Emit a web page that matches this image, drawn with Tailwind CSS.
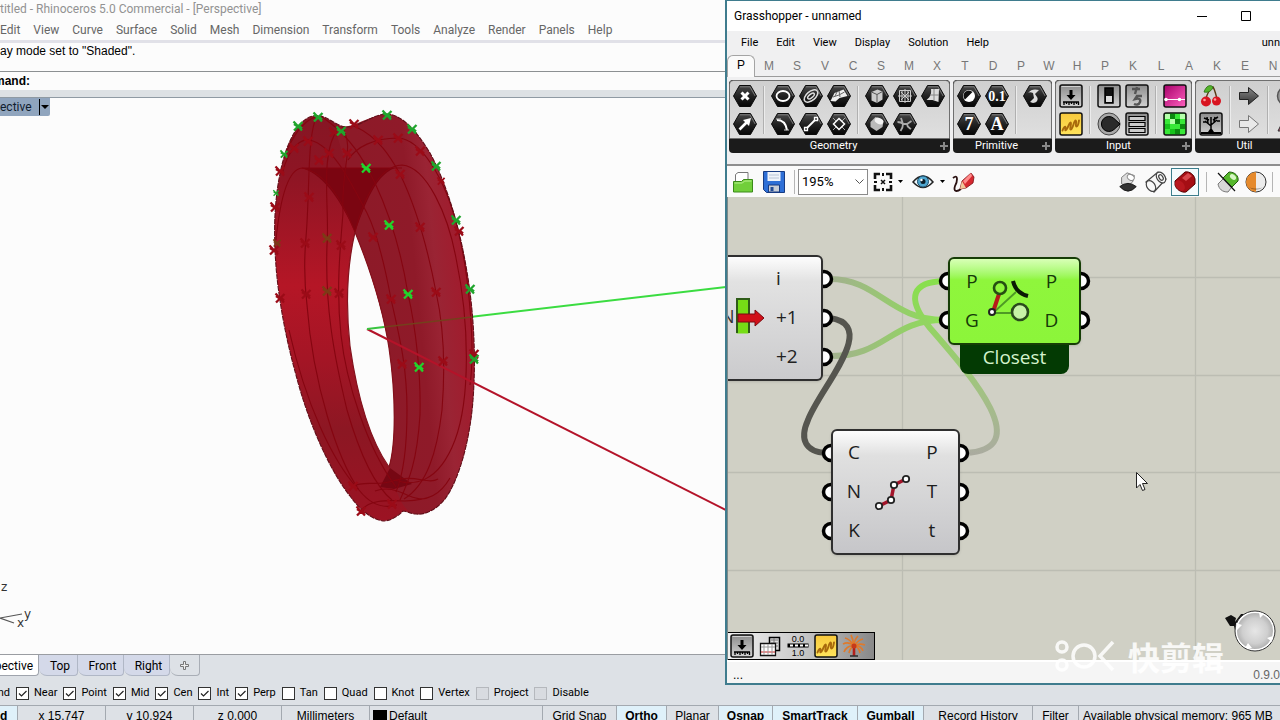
<!DOCTYPE html>
<html lang="en">
<head>
<meta charset="utf-8">
<title>Rhinoceros and Grasshopper</title>
<script src="https://cdn.jsdelivr.net/npm/@tailwindcss/browser@4"></script>
</head>
<body class="h-screen overflow-hidden bg-[#fcfcfc] font-['Roboto','Noto_Sans_CJK_SC',sans-serif] text-xs text-black">

<svg class="absolute size-0" aria-hidden="true">
  <defs>
    <linearGradient id="hexFill" x1="0" y1="0" x2="0" y2="1"><stop offset="0" stop-color="#4a4a4a"/><stop offset=".5" stop-color="#222"/><stop offset="1" stop-color="#050505"/></linearGradient>
    <linearGradient id="plate" x1="0" y1="0" x2="0" y2="1"><stop offset="0" stop-color="#8c8c8c"/><stop offset="1" stop-color="#d2d2d2"/></linearGradient>
    <linearGradient id="yellow" x1="0" y1="0" x2="0" y2="1"><stop offset="0" stop-color="#f8c93c"/><stop offset="1" stop-color="#ffe45c"/></linearGradient>
    <linearGradient id="pink" x1="0" y1="0" x2="1" y2="1"><stop offset="0" stop-color="#a8006a"/><stop offset="1" stop-color="#ff62c0"/></linearGradient>
    <linearGradient id="arrowDark" x1="0" y1="0" x2="0" y2="1"><stop offset="0" stop-color="#888"/><stop offset="1" stop-color="#333"/></linearGradient>
    <radialGradient id="ball" cx=".5" cy=".5" r=".55"><stop offset="0" stop-color="#e6e6e6"/><stop offset=".6" stop-color="#cfcfcf"/><stop offset="1" stop-color="#a4a4a4"/></radialGradient>
    <symbol id="hex" viewBox="0 0 24 24"><path d="M6.500 1.500h11L23.500 12l-6 10.500h-11L.5 12z" fill="url(#hexFill)" stroke="#0b0b0b"/><path d="M7 2.800h10L22.200 12" fill="none" stroke="#8a8a8a" stroke-width=".8"/></symbol>
    <symbol id="tray" viewBox="0 0 24 24"><rect x="1" y="1" width="22" height="22" rx="2" fill="url(#plate)" stroke="#111" stroke-width="1.500"/><path d="M2.500 2.500h19" stroke="#e0e0e0" stroke-width=".8"/><path d="M10.500 6h3v5h3L12 16l-4.500-5h3z" fill="#000"/><path d="M4 18h16M5 18v3M7.500 18v2M10 18v3M12.500 18v2M15 18v3M17.500 18v2M19.500 18v3" stroke="#000" stroke-width="1.300"/></symbol>
    <symbol id="scribble" viewBox="0 0 24 24"><rect x="1" y="1" width="22" height="22" rx="2" fill="url(#yellow)" stroke="#111" stroke-width="1.500"/><path d="M3.500 18.500c1-3 3-5 3-3s-1 4 1 2 2.500-7 4-7-1.500 8 .5 7 3-9 4.500-9-.5 6 1 6 2-3 2.500-6" fill="none" stroke="#a8690c" stroke-width="1.900" stroke-linecap="round" stroke-linejoin="round"/></symbol>
    <symbol id="x" viewBox="-5 -5 10 10" overflow="visible"><path d="M-4.500-4.500 4 4.500M4.500-4-4 4.500M-4-2l3 2M4 2.500 1 0" fill="none" stroke="currentColor" stroke-width="2.300"/></symbol>
    <symbol id="plus" viewBox="0 0 8 8"><path d="M4 0v8M0 4h8" stroke="#888" stroke-width="2"/></symbol>
  </defs>
</svg>

<!-- Rhinoceros main window -->
<main class="flex h-full w-full flex-col">
  <header class="flex h-[18px] shrink-0 items-center whitespace-nowrap text-[#929292]"><h1>titled - Rhinoceros 5.0 Commercial - [Perspective]</h1></header>
  <nav class="flex h-[22px] shrink-0 items-center gap-[13px] pt-px text-[#666]" aria-label="Rhino menu">
    <button>Edit</button><button>View</button><button>Curve</button><button>Surface</button><button>Solid</button><button>Mesh</button><button>Dimension</button><button>Transform</button><button>Tools</button><button>Analyze</button><button>Render</button><button>Panels</button><button>Help</button>
  </nav>
  <div class="h-8 shrink-0 border-t-3 border-b border-t-[#e1e1e8] border-b-[#8c9092] font-['Liberation_Sans',sans-serif] leading-4">ay mode set to "Shaded".</div>
  <label class="flex h-[18px] shrink-0 items-center font-['Liberation_Sans',sans-serif] font-bold"><span class="flex w-[30px] justify-end overflow-hidden">mand:</span><input class="ml-2 h-4 flex-1 outline-none" type="text" aria-label="Command"></label>
  <div class="h-2 shrink-0 border-b border-[#8f9aa3] bg-[#dde1e4]"></div>

  <section class="relative min-h-0 flex-1 overflow-hidden" aria-label="Perspective viewport">
    <svg class="block h-[556px] w-[726px]" viewBox="0 98 726 556" fill="none">
      <defs>
        <linearGradient id="lobeL" x1="320" y1="115" x2="320" y2="521" gradientUnits="userSpaceOnUse"><stop offset="0" stop-color="#861624"/><stop offset=".15" stop-color="#8e1524"/><stop offset=".42" stop-color="#b51626"/><stop offset=".6" stop-color="#a41525"/><stop offset=".78" stop-color="#8c1723"/><stop offset="1" stop-color="#9c1323"/></linearGradient>
        <linearGradient id="lobeR" x1="370" y1="300" x2="475" y2="290" gradientUnits="userSpaceOnUse"><stop offset="0" stop-color="#8d1a28"/><stop offset=".45" stop-color="#8f1a29"/><stop offset=".65" stop-color="#9a2434"/><stop offset="1" stop-color="#a4182a"/></linearGradient>
      </defs>
      <path d="M470 317 726 287" stroke="#3bdc41" stroke-width="2"/>
      <!-- ring body -->
      <path fill-rule="evenodd" fill="url(#lobeL)" d="M275 248C273 205 279 170 287 148C296 125 306 115 318 115.500C330 117 336 127 348 127C362 126 372 114 388 114C404 116 417 132 430 153C448 186 462 235 469 285C474 320 476 360 473 400C470 440 459 480 445 499C435 511 424 515 416 514C411 514 407 511 403 511C397 517 390 521 383 521C371 519 360 510 350 496C330 471 308 422 296 375C284 332 276 285 275 248zM355 232C348 262 345 300 350 346C357 395 370 440 389 467C396 445 396 395 389 348C384 315 371 271 355 232z"/>
      <path fill="url(#lobeR)" d="M355 232C362 210 342 150 334 127C352 130 368 115 388 114C404 116 417 132 430 153C448 186 462 235 469 285C474 320 476 360 473 400C470 440 459 480 445 499C435 511 424 515 416 514C405 513 398 500 389 467C396 445 396 395 389 348C384 315 371 271 355 232z"/>
      <path d="M302 168H395C373 176 363 212 355 232C344 208 327 176 302 168z" fill="#7b0511"/>
      <path d="M380 487 390 468 412 484 394 489z" fill="#760713"/>
      <!-- surface isocurves -->
      <g stroke="#850510" stroke-width="1.100">
        <path d="M276 240C281 190 290 169 302 168C326 172 344 204 355 232C362 205 377 166 402 165C427 167 448 215 456 258C470 325 470 400 455 440C438 485 412 486 395 480"/>
        <path d="M302 168H402"/>
        <path d="M282 174C290 143 303 139 310 140C334 146 352 185 367 213C378 235 385 267 391 299C399 335 407 365 407 410C407 455 401 480 396 492"/>
        <path d="M286 153C297 125 315 111 325 119C350 137 363 158 375 183C390 215 401 250 408 294C416 329 421 375 420 415C417 462 409 480 400 500"/>
        <path d="M354 126C379 137 391 158 400 174C417 209 428 250 436 292C445 332 445 372 442 410C437 452 427 485 404 499"/>
        <path d="M317 116C307 134 310 190 306 237C304 260 304 280 307 305C313 385 338 460 359 490C370 504 383 509 397 505"/>
        <path d="M338 129C319 153 330 211 327 245C325 305 333 352 347 410C360 455 375 486 392 500"/>
        <path d="M342 127C355 148 341 165 343 213C340 250 336 290 341 335C346 382 367 448 396 487"/>
        <path d="M348 160C356 147 374 138 398 138C420 139 445 176 458 230C470 280 475 350 470 385"/>
        <path d="M353 486C365 480 379 487 396 480C415 474 428 485 438 479M361 511C368 500 385 500 405 501C430 500 440 495 450 478M375 491C400 482 412 507 432 496"/>
        <path d="M289 330C306 405 332 460 358 489"/>
      </g>
      <path d="M275 248C273 205 279 170 287 148C296 125 306 115 318 115.500C330 117 336 127 348 127C362 126 372 114 388 114C404 116 417 132 430 153C448 186 462 235 469 285C474 320 476 360 473 400C470 440 459 480 445 499C435 511 424 515 416 514C411 514 407 511 403 511C397 517 390 521 383 521C371 519 360 510 350 496C330 471 308 422 296 375C284 332 276 285 275 248z" stroke="#62101a" stroke-width="1.100" stroke-dasharray="5 1"/>
      <path d="M355 232C348 262 345 300 350 346C357 395 370 440 389 467C396 445 396 395 389 348C384 315 371 271 355 232" stroke="#83121d" stroke-width="1.200"/>
      <path d="M384 327 472 317" stroke="#74401c" stroke-width="1.500"/>
      <path d="M367 329 726 510" stroke="#b41329" stroke-width="2"/>
      <path d="M367 329 384 327" stroke="#39c540" stroke-width="2"/>
      <!-- division points -->
      <g class="text-[#9b0b17]">
        <use href="#x" x="349" y="119" width="10" height="10"/><use href="#x" x="329" y="127" width="10" height="10"/><use href="#x" x="303" y="136" width="10" height="10"/><use href="#x" x="289" y="143" width="10" height="10"/><use href="#x" x="324" y="148" width="10" height="10"/><use href="#x" x="342" y="148" width="10" height="10"/><use href="#x" x="314" y="155" width="10" height="10"/><use href="#x" x="373" y="135" width="10" height="10"/><use href="#x" x="393" y="133" width="10" height="10"/><use href="#x" x="415" y="146" width="10" height="10"/><use href="#x" x="275" y="166" width="10" height="10"/><use href="#x" x="395" y="169" width="10" height="10"/><use href="#x" x="304" y="192" width="10" height="10"/><use href="#x" x="270" y="202" width="10" height="10"/><use href="#x" x="437" y="177" width="8" height="8"/><use href="#x" x="454" y="226" width="10" height="10"/><use href="#x" x="368" y="232" width="10" height="10"/><use href="#x" x="415" y="222" width="10" height="10"/><use href="#x" x="269" y="245" width="10" height="10"/><use href="#x" x="300" y="238" width="10" height="10"/><use href="#x" x="336" y="240" width="10" height="10"/><use href="#x" x="275" y="293" width="10" height="10"/><use href="#x" x="301" y="289" width="10" height="10"/><use href="#x" x="334" y="288" width="10" height="10"/><use href="#x" x="386" y="294" width="10" height="10"/><use href="#x" x="431" y="287" width="10" height="10"/><use href="#x" x="397" y="359" width="10" height="10"/><use href="#x" x="438" y="356" width="10" height="10"/><use href="#x" x="469" y="349" width="10" height="10"/><use href="#x" x="348" y="481" width="10" height="10"/><use href="#x" x="387" y="499" width="10" height="10"/><use href="#x" x="356" y="506" width="10" height="10"/>
      </g>
      <g class="text-[#7c3a16]"><use href="#x" x="322" y="233" width="10" height="10"/><use href="#x" x="322" y="286" width="10" height="10"/><use href="#x" x="273" y="239" width="8" height="8"/></g>
      <g class="text-[#20a52d]">
        <use href="#x" x="293" y="121" width="10" height="10"/><use href="#x" x="313" y="112" width="10" height="10"/><use href="#x" x="336" y="126" width="10" height="10"/><use href="#x" x="382" y="110" width="10" height="10"/><use href="#x" x="407" y="124" width="10" height="10"/><use href="#x" x="280" y="149" width="8" height="10"/><use href="#x" x="431" y="161" width="10" height="10"/><use href="#x" x="273" y="189" width="6" height="8"/><use href="#x" x="451" y="215" width="10" height="10"/><use href="#x" x="465" y="284" width="10" height="10"/><use href="#x" x="469" y="354" width="10" height="10"/>
      </g>
      <g class="text-[#22d32c]"><use href="#x" x="361" y="163" width="10" height="10"/><use href="#x" x="384" y="220" width="10" height="10"/><use href="#x" x="403" y="289" width="10" height="10"/><use href="#x" x="414" y="362" width="10" height="10"/></g>
      <!-- world axes icon -->
      <path d="M0 618 22 614M0 618 14 623" stroke="#555" stroke-width="1.200"/>
      <g class="font-['DejaVu_Sans',sans-serif] text-xs" fill="#333"><text x="1" y="591">z</text><text x="24" y="618">y</text><text x="17" y="627">x</text></g>
    </svg>
    <div class="absolute top-0 left-0 flex h-[18px] w-[50px] items-center justify-between rounded-br-xs bg-[#90a5be] text-[#10202f]">
      <span>ective</span>
      <button class="flex h-4 w-[11px] items-center justify-center border-l border-black" aria-label="Viewport menu"><svg class="h-1 w-2" viewBox="0 0 8 4"><path d="M0 0h8L4 4z"/></svg></button>
    </div>
  </section>

  <div class="flex h-7 shrink-0 border-t border-[#9a9da2] bg-[#dde1e6] *:h-[21px] *:pt-px" role="tablist">
    <button class="flex w-[39px] items-center justify-end overflow-hidden rounded-br-sm border-r border-b border-[#9fa4ad] bg-white pr-[5px]">pective</button>
    <button class="w-[39px] rounded-br-sm rounded-bl-lg border-r border-b border-[#b0b7c6] bg-[#d4d9e9] pl-1">Top</button>
    <button class="w-[46px] rounded-br-sm rounded-bl-lg border-r border-b border-[#b0b7c6] bg-[#d4d9e9] pl-1">Front</button>
    <button class="w-[46px] rounded-br-sm rounded-bl-lg border-r border-b border-[#b0b7c6] bg-[#d4d9e9] pl-1">Right</button>
    <button class="flex w-[30px] items-center justify-center rounded-br-sm rounded-bl-lg border-r border-b border-[#a9aeb6]" aria-label="New viewport"><svg class="h-[9px] w-[9px]" viewBox="0 0 9 9"><path d="M3.500.5h2v3h3v2h-3v3h-2v-3h-3v-2h3z" fill="#eee" stroke="#777"/></svg></button>
  </div>

  <div class="flex h-[22px] shrink-0 items-center gap-[6px] bg-[#dde1e6] text-[11px]">
    <span class="flex w-[10px] justify-end overflow-hidden">End</span>
    <label class="flex items-center gap-[5px]"><span class="grid"><input type="checkbox" checked class="peer col-start-1 row-start-1 size-[13px] appearance-none border border-[#333] bg-white"><svg class="col-start-1 row-start-1 hidden size-[13px] peer-checked:block" viewBox="0 0 13 13"><path d="m3 6.500 2.500 2.500L10.500 4" fill="none" stroke="#222" stroke-width="1.200"/></svg></span>Near</label>
    <label class="flex items-center gap-[5px]"><span class="grid"><input type="checkbox" checked class="peer col-start-1 row-start-1 size-[13px] appearance-none border border-[#333] bg-white"><svg class="col-start-1 row-start-1 hidden size-[13px] peer-checked:block" viewBox="0 0 13 13"><path d="m3 6.500 2.500 2.500L10.500 4" fill="none" stroke="#222" stroke-width="1.200"/></svg></span>Point</label>
    <label class="flex items-center gap-[5px]"><span class="grid"><input type="checkbox" checked class="peer col-start-1 row-start-1 size-[13px] appearance-none border border-[#333] bg-white"><svg class="col-start-1 row-start-1 hidden size-[13px] peer-checked:block" viewBox="0 0 13 13"><path d="m3 6.500 2.500 2.500L10.500 4" fill="none" stroke="#222" stroke-width="1.200"/></svg></span>Mid</label>
    <label class="flex items-center gap-[5px]"><span class="grid"><input type="checkbox" checked class="peer col-start-1 row-start-1 size-[13px] appearance-none border border-[#333] bg-white"><svg class="col-start-1 row-start-1 hidden size-[13px] peer-checked:block" viewBox="0 0 13 13"><path d="m3 6.500 2.500 2.500L10.500 4" fill="none" stroke="#222" stroke-width="1.200"/></svg></span>Cen</label>
    <label class="flex items-center gap-[5px]"><span class="grid"><input type="checkbox" checked class="peer col-start-1 row-start-1 size-[13px] appearance-none border border-[#333] bg-white"><svg class="col-start-1 row-start-1 hidden size-[13px] peer-checked:block" viewBox="0 0 13 13"><path d="m3 6.500 2.500 2.500L10.500 4" fill="none" stroke="#222" stroke-width="1.200"/></svg></span>Int</label>
    <label class="flex items-center gap-[5px]"><span class="grid"><input type="checkbox" checked class="peer col-start-1 row-start-1 size-[13px] appearance-none border border-[#333] bg-white"><svg class="col-start-1 row-start-1 hidden size-[13px] peer-checked:block" viewBox="0 0 13 13"><path d="m3 6.500 2.500 2.500L10.500 4" fill="none" stroke="#222" stroke-width="1.200"/></svg></span>Perp</label>
    <label class="flex items-center gap-[5px]"><input type="checkbox" class="size-[13px] appearance-none border border-[#333] bg-white">Tan</label>
    <label class="flex items-center gap-[5px]"><input type="checkbox" class="size-[13px] appearance-none border border-[#333] bg-white">Quad</label>
    <label class="flex items-center gap-[5px]"><input type="checkbox" class="size-[13px] appearance-none border border-[#333] bg-white">Knot</label>
    <label class="flex items-center gap-[5px]"><input type="checkbox" class="size-[13px] appearance-none border border-[#333] bg-white">Vertex</label>
    <label class="flex items-center gap-[5px]"><input type="checkbox" class="size-[13px] appearance-none border border-[#b5b8bd] bg-[#d8dbe0]">Project</label>
    <label class="flex items-center gap-[5px]"><input type="checkbox" class="size-[13px] appearance-none border border-[#b5b8bd] bg-[#d8dbe0]">Disable</label>
  </div>

  <footer class="h-4 shrink-0 overflow-hidden bg-[#dde1e6] pt-px font-['Liberation_Sans',sans-serif]">
    <div class="flex h-5 items-center border-t border-[#a3a9b0] whitespace-nowrap *:h-full *:shrink-0 *:leading-5">
      <button class="w-[18px] border-r border-[#a3a9b0] bg-[#dff1fa] pr-[10px] text-left font-bold">d</button>
      <span class="w-[88px] border-r border-[#a3a9b0] text-center">x 15.747</span>
      <span class="w-[88px] border-r border-[#a3a9b0] text-center">y 10.924</span>
      <span class="w-[88px] border-r border-[#a3a9b0] text-center">z 0.000</span>
      <button class="w-[88px] border-r border-[#a3a9b0] text-center">Millimeters</button>
      <button class="flex w-[173px] items-center gap-[2px] border-r border-[#a3a9b0] pl-[3px]"><span class="h-3 w-[14px] bg-black"></span>Default</button>
      <button class="w-[74px] border-r border-[#a3a9b0]">Grid Snap</button>
      <button class="w-[50px] border-r border-[#a3a9b0] bg-[#dff1fa] font-bold">Ortho</button>
      <button class="w-[52px] border-r border-[#a3a9b0]">Planar</button>
      <button class="w-[54px] border-r border-[#a3a9b0] bg-[#dff1fa] font-bold">Osnap</button>
      <button class="w-[85px] border-r border-[#a3a9b0] bg-[#dff1fa] font-bold">SmartTrack</button>
      <button class="w-[66px] border-r border-[#a3a9b0] bg-[#dff1fa] font-bold">Gumball</button>
      <button class="w-[109px] border-r border-[#a3a9b0]">Record History</button>
      <button class="w-[46px] border-r border-[#a3a9b0]">Filter</button>
      <span class="pl-1">Available physical memory: 965 MB</span>
    </div>
  </footer>
</main>

<!-- Grasshopper window -->
<section class="absolute top-0 right-0 left-[725px] flex h-[685px] flex-col overflow-hidden border-t border-b-2 border-l-2 border-[#3f7c8e] bg-[#f0f0f1]" aria-label="Grasshopper">
  <header class="flex h-[30px] shrink-0 items-center bg-white pl-[7px]">
    <h2 class="flex-1">Grasshopper - unnamed</h2>
    <button class="flex w-11 justify-center" aria-label="Minimise"><svg class="size-[11px]" viewBox="0 0 11 11"><path d="M0 5.500h10" stroke="#000"/></svg></button>
    <button class="mr-3 flex w-11 justify-center" aria-label="Maximise"><svg class="size-[11px]" viewBox="0 0 11 11"><path d="M.5.5h9v9h-9z" fill="none" stroke="#000"/></svg></button>
  </header>
  <nav class="flex h-6 shrink-0 items-center gap-[18px] pl-[14px] text-[11px]" aria-label="Grasshopper menu">
    <button>File</button><button>Edit</button><button>View</button><button>Display</button><button>Solution</button><button>Help</button>
    <span class="ml-auto">unn</span>
  </nav>
  <div class="flex h-[22px] shrink-0 border-b border-[#9c9c9c] font-['Liberation_Sans',sans-serif] text-[#777] *:w-7 *:shrink-0" role="tablist">
    <button class="h-[22px] rounded-t-md border border-b-0 border-[#a4a4a4] bg-[#fafafa] pb-1 text-black">P</button>
    <button>M</button><button>S</button><button>V</button><button>C</button><button>S</button><button>M</button><button>X</button><button>T</button><button>D</button><button>P</button><button>W</button><button>H</button><button>P</button><button>K</button><button>L</button><button>A</button><button>K</button><button>E</button><button>N</button>
  </div>

  <div class="flex h-[89px] shrink-0 gap-[3px] border-b-2 border-[#8e8e8e] pt-[3px] pl-[2px] text-[11px]">
    <!-- Geometry -->
    <div class="flex h-[73px] shrink-0 flex-col overflow-hidden rounded-[4px] bg-[#1b1b1b]">
      <div class="flex rounded-t-[4px] border border-[#6f6f6f] bg-linear-to-b from-[#cfcfcf] to-[#dfdfdf] pt-px pr-[2px] pl-px">
        <div class="grid grid-cols-[28px] *:flex *:size-7 *:items-center *:justify-center">
          <button aria-label="Point"><svg class="size-6" viewBox="0 0 24 24"><use href="#hex"/><path d="m8.500 8.500 7 7m0-7-7 7" stroke="#fff" stroke-width="3"/></svg></button>
          <button aria-label="Vector"><svg class="size-6" viewBox="0 0 24 24"><use href="#hex"/><path d="m6.500 17.500 7-7" stroke="#fff" stroke-width="2.600"/><path d="m10 8 8-2-2 8z" fill="#fff"/></svg></button>
        </div>
        <div class="mx-[4px] my-1 w-[2px] border-r border-l border-r-[#ececec] border-l-[#b0b0b0]"></div>
        <div class="grid grid-cols-[28px_28px_28px] *:flex *:size-7 *:items-center *:justify-center">
          <button aria-label="Circle"><svg class="size-6" viewBox="0 0 24 24"><use href="#hex"/><ellipse cx="12" cy="12" rx="6.500" ry="5" fill="none" stroke="#fff" stroke-width="1.800"/></svg></button>
          <button aria-label="Circular arc"><svg class="size-6" viewBox="0 0 24 24"><use href="#hex"/><g fill="none" stroke="#ddd" stroke-width="1.500" transform="rotate(-40 12 12)"><ellipse cx="12" cy="12" rx="8" ry="4.500"/><ellipse cx="12" cy="12" rx="4" ry="1.800"/></g></svg></button>
          <button aria-label="Surface"><svg class="size-6" viewBox="0 0 24 24"><use href="#hex"/><path d="m3.500 17 4-8 9-3.500 4 6.500-8 2-4 3.500z" fill="#eee"/><path d="m6 13 6-2 5.500-3M12 7l1 6M8 12l2-4" fill="none" stroke="#666"/></svg></button>
          <button aria-label="Arc"><svg class="size-6" viewBox="0 0 24 24"><use href="#hex"/><path d="M6 8c6 0 9 4 10 10" fill="none" stroke="#fff" stroke-width="2"/><path d="M5 7h5M13 18h5" stroke="#ccc"/></svg></button>
          <button aria-label="Line"><svg class="size-6" viewBox="0 0 24 24"><use href="#hex"/><path d="m8 16 8-8" stroke="#fff" stroke-width="1.800"/><path d="M5.500 15.500h3v3h-3zM15.500 5.500h3v3h-3z" fill="#222" stroke="#fff" stroke-width="1.300"/></svg></button>
          <button aria-label="Rectangle"><svg class="size-6" viewBox="0 0 24 24"><use href="#hex"/><path d="m12 6.500 5.500 5.500-5.500 5.500L6.500 12z" fill="none" stroke="#fff" stroke-width="1.500"/><path d="m6 6 3 3m6 6 3 3M18 6l-3 3m-6 6-3 3" stroke="#aaa"/></svg></button>
        </div>
        <div class="mx-[4px] my-1 w-[2px] border-r border-l border-r-[#ececec] border-l-[#b0b0b0]"></div>
        <div class="grid grid-cols-[28px_28px_28px] *:flex *:size-7 *:items-center *:justify-center">
          <button aria-label="Box"><svg class="size-6" viewBox="0 0 24 24"><use href="#hex"/><path d="m6.500 8 6-2.500 5 2v8L12 19l-5.500-2.500z" fill="#ccc"/><path d="m6.500 8 5.500 2.500V19M12 10.500l5.500-3" fill="none" stroke="#555"/></svg></button>
          <button aria-label="Mesh"><svg class="size-6" viewBox="0 0 24 24"><use href="#hex"/><path d="M6.500 6.500h11v11h-11zM12 5v14M5 12h14M8 8l8 8m0-8-8 8M9 6v12M15 6v12" fill="none" stroke="#ccc"/></svg></button>
          <button aria-label="Mesh face"><svg class="size-6" viewBox="0 0 24 24"><use href="#hex"/><path d="M10 5h8l-.5 13-6-2-6 0c4-3 5-6 4.500-11z" fill="#ddd"/><path d="M13 5v11M9 11h9" stroke="#888"/></svg></button>
          <button aria-label="Brep"><svg class="size-6" viewBox="0 0 24 24"><use href="#hex"/><path d="m5.500 10 5-5 8 4-1 6-6 4-6-4z" fill="#bbb"/><ellipse cx="14" cy="9" rx="4.500" ry="3" fill="#f2f2f2" transform="rotate(25 14 9)"/></svg></button>
          <button aria-label="Field"><svg class="size-6" viewBox="0 0 24 24"><use href="#hex"/><path d="M4.500 10c4 0 5 1.500 5.500 2l4 0 4.500-3M10 12c0 3-1 5-2.500 7M14 12c0 3 2 3.500 4 5M10 12 8 6" fill="none" stroke="#aaa" stroke-width="1.800"/></svg></button>
        </div>
      </div>
      <div class="relative flex h-[14px] items-center justify-center pr-3 text-white">Geometry<svg class="absolute right-[2px] size-2"><use href="#plus"/></svg></div>
    </div>
    <!-- Primitive -->
    <div class="flex h-[73px] shrink-0 flex-col overflow-hidden rounded-[4px] bg-[#1b1b1b]">
      <div class="flex rounded-t-[4px] border border-[#6f6f6f] bg-linear-to-b from-[#cfcfcf] to-[#dfdfdf] pt-px pr-[2px] pl-px">
        <div class="grid grid-cols-[28px_28px] *:flex *:size-7 *:items-center *:justify-center">
          <button aria-label="Boolean"><svg class="size-6" viewBox="0 0 24 24"><use href="#hex"/><circle cx="12" cy="12" r="6" fill="#fff"/><path d="M8 15.500A5 5 0 0 1 15.500 8z" fill="#111"/></svg></button>
          <button aria-label="Number"><svg class="size-6" viewBox="0 0 24 24"><use href="#hex"/><text x="12" y="17" fill="#fff" text-anchor="middle" class="font-['Liberation_Serif',serif] text-[14px] font-bold">0.1</text></svg></button>
          <button aria-label="Integer"><svg class="size-6" viewBox="0 0 24 24"><use href="#hex"/><text x="12" y="18" fill="#fff" text-anchor="middle" class="font-['Liberation_Serif',serif] text-[18px] font-bold">7</text></svg></button>
          <button aria-label="Text"><svg class="size-6" viewBox="0 0 24 24"><use href="#hex"/><text x="12" y="18" fill="#fff" text-anchor="middle" class="font-['Liberation_Serif',serif] text-[18px] font-bold">A</text></svg></button>
        </div>
        <div class="mx-[4px] my-1 w-[2px] border-r border-l border-r-[#ececec] border-l-[#b0b0b0]"></div>
        <div class="grid grid-cols-[28px] *:flex *:size-7 *:items-center *:justify-center">
          <button aria-label="File path"><svg class="size-6" viewBox="0 0 24 24"><use href="#hex"/><path d="M5 9c3-4 7-4 11-3l-4 4 2 3c2 3-1 6-4 6l-3-1 4-4-1-5c-2-1-4-1-5 0z" fill="#ddd"/></svg></button>
        </div>
      </div>
      <div class="relative flex h-[14px] items-center justify-center pr-3 text-white">Primitive<svg class="absolute right-[2px] size-2"><use href="#plus"/></svg></div>
    </div>
    <!-- Input -->
    <div class="flex h-[73px] shrink-0 flex-col overflow-hidden rounded-[4px] bg-[#1b1b1b]">
      <div class="flex rounded-t-[4px] border border-[#6f6f6f] bg-linear-to-b from-[#cfcfcf] to-[#dfdfdf] pt-px pr-[2px] pl-px">
        <div class="grid grid-cols-[28px] *:flex *:size-7 *:items-center *:justify-center">
          <button aria-label="Number slider"><svg class="size-6"><use href="#tray"/></svg></button>
          <button aria-label="Panel"><svg class="size-6"><use href="#scribble"/></svg></button>
        </div>
        <div class="mx-[4px] my-1 w-[2px] border-r border-l border-r-[#ececec] border-l-[#b0b0b0]"></div>
        <div class="grid grid-cols-[28px_28px] *:flex *:size-7 *:items-center *:justify-center">
          <button aria-label="Boolean toggle"><svg class="size-6" viewBox="0 0 24 24"><rect x="1" y="1" width="22" height="22" rx="2" fill="url(#plate)" stroke="#111" stroke-width="1.500"/><path d="M8 4h8v15H8z" fill="#111" stroke="#000" stroke-width="1.500"/><path d="M9 12h6v6H9z" fill="#ddd"/></svg></button>
          <button aria-label="Clock"><svg class="size-6" viewBox="0 0 24 24"><rect x="1" y="1" width="22" height="22" rx="2" fill="url(#plate)" stroke="#111" stroke-width="1.500"/><path d="M7 5h8M12 3l-2 7M17 12h-5l-2 3c4-1 6 0 5 3s-4 3-6 2" fill="none" stroke="#555" stroke-width="2.400"/></svg></button>
          <button aria-label="Control knob"><svg class="size-6" viewBox="0 0 24 24"><circle cx="12" cy="12" r="11" fill="#a8a8a8" stroke="#444"/><path d="M17 6.500a7.500 7.500 0 1 0 0 11l6-5.500z" fill="#2a2a2a" stroke="#000"/></svg></button>
          <button aria-label="Value list"><svg class="size-6" viewBox="0 0 24 24"><rect x="1" y="1" width="22" height="22" rx="2" fill="url(#plate)" stroke="#111" stroke-width="1.500"/><path d="M4 4.500h16v4H4zM4 10.500h16v4H4zM4 16.500h16v4H4z" fill="#ccc" stroke="#000" stroke-width="1.200"/></svg></button>
        </div>
        <div class="mx-[4px] my-1 w-[2px] border-r border-l border-r-[#ececec] border-l-[#b0b0b0]"></div>
        <div class="grid grid-cols-[28px] *:flex *:size-7 *:items-center *:justify-center">
          <button aria-label="Gradient"><svg class="size-6" viewBox="0 0 24 24"><rect x="1" y="1" width="22" height="22" rx="2" fill="url(#pink)" stroke="#111" stroke-width="1.500"/><path d="M2 15.500h20" stroke="#fff"/><circle cx="3" cy="15.500" r="1.800" fill="#fff"/><circle cx="16.500" cy="15.500" r="1.800" fill="#fff"/></svg></button>
          <button aria-label="Image sampler"><svg class="size-6" viewBox="0 0 24 24"><rect x="1" y="1" width="22" height="22" rx="2" fill="#38e838" stroke="#111" stroke-width="1.500"/><path d="M2 2h5v5H2zM17 2h5v5h-5zM7 7h5v5H7z" fill="#b5ffab"/><path d="M7 2h5v5H7zM12 7h5v5h-5zM12 17h5v5h-5zM17 12h5v5h-5z" fill="#0b8a10"/><path d="M2 12h5v5H2zM7 17h5v5H7z" fill="#17c31c"/></svg></button>
        </div>
      </div>
      <div class="relative flex h-[14px] items-center justify-center pr-[10px] text-white">Input<svg class="absolute right-[2px] size-2"><use href="#plus"/></svg></div>
    </div>
    <!-- Util -->
    <div class="flex h-[73px] shrink-0 flex-col overflow-hidden rounded-[4px] bg-[#1b1b1b]">
      <div class="flex rounded-t-[4px] border border-[#6f6f6f] bg-linear-to-b from-[#cfcfcf] to-[#dfdfdf] pt-px pr-[2px] pl-px">
        <div class="grid grid-cols-[28px] *:flex *:size-7 *:items-center *:justify-center">
          <button aria-label="Cherry picker"><svg class="size-6" viewBox="0 0 24 24"><path d="M7 14C9 8 11 5 14 3c2 3 3 8 4 12" fill="none" stroke="#5a3a14" stroke-width="1.400"/><path d="M14 3C11 0 7 2 5 8c4 1 8-1 9-5z" fill="#55b52c" stroke="#276a10" stroke-width=".8"/><circle cx="7" cy="17.500" r="5" fill="#d81420"/><circle cx="17.500" cy="17" r="4.500" fill="#d81420"/><circle cx="5.500" cy="16" r="1.300" fill="#ff9a9a"/><circle cx="16" cy="15.500" r="1.300" fill="#ff9a9a"/></svg></button>
          <button aria-label="Param viewer"><svg class="size-6" viewBox="0 0 24 24"><rect x="1" y="1" width="22" height="22" rx="2" fill="url(#plate)" stroke="#111" stroke-width="1.500"/><path d="M12 21v-9M12 14 6 9M12 13l6-5M12 12V5M9 11 8 5M15 10l1-5M7 10H4M18 9h3M10 8 5 6M14 8l5-3" fill="none" stroke="#000" stroke-width="1.500"/><path d="M2 20h20v2H2zM9 20l2-3h2l2 3z"/></svg></button>
        </div>
        <div class="mx-[4px] my-1 w-[2px] border-r border-l border-r-[#ececec] border-l-[#b0b0b0]"></div>
        <div class="grid grid-cols-[28px] *:flex *:size-7 *:items-center *:justify-center">
          <button aria-label="Data input"><svg class="size-6" viewBox="0 0 24 24"><path d="M2.500 8.500h9v-5l10 8.500-10 8.500v-5h-9z" fill="url(#arrowDark)" stroke="#222"/></svg></button>
          <button aria-label="Data output"><svg class="size-6" viewBox="0 0 24 24"><path d="M2.500 8.500h9v-5l10 8.500-10 8.500v-5h-9z" fill="#e9e9e9" stroke="#777"/></svg></button>
        </div>
        <div class="mx-[4px] my-1 w-[2px] border-r border-l border-r-[#ececec] border-l-[#b0b0b0]"></div>
        <div class="grid grid-cols-[28px] *:flex *:size-7 *:items-center *:justify-center">
          <button aria-label="Timer"><svg class="size-6" viewBox="0 0 24 24"><circle cx="12" cy="12" r="9.500" fill="#999" stroke="#555" stroke-width="1.500"/></svg></button>
          <button aria-label="Trigger"><svg class="size-6" viewBox="0 0 24 24"><path d="m3 19 6-12 4 2-4 10z" fill="#a3506a" stroke="#333"/></svg></button>
        </div>
      </div>
      <div class="flex h-[14px] items-center justify-center pr-[10px] text-white">Util</div>
    </div>
  </div>

  <!-- canvas toolbar -->
  <div class="flex h-[31px] shrink-0 items-center bg-[#fafafa] pl-[5px]">
    <button class="mr-2 flex w-[22px] justify-center" aria-label="Open"><svg class="size-[22px]" viewBox="0 0 22 22"><path d="M3.500 12V3.500L6 1.500h10V12" fill="#fff" stroke="#777"/><path d="M1.500 10.500h8l2-2h9V21h-19z" fill="#71cf3a" stroke="#3a8a18"/><path d="M2.500 12h8l2-2h7" fill="none" stroke="#b9f290"/></svg></button>
    <button class="mr-2 flex w-6 justify-center" aria-label="Save"><svg class="size-6" viewBox="0 0 24 24"><path d="M1.500 1.500h21v21h-18l-3-3z" fill="#2e6fd6" stroke="#173b82"/><path d="M5.500 2h13v9h-13z" fill="#eef3fa"/><path d="M7 5h10M7 8h10" stroke="#b8c4d6"/><path d="M6.500 15h11v7h-11z" fill="#c8cdd6" stroke="#173b82"/><path d="M8.500 17h3v4h-3z" fill="#234b94"/></svg></button>
    <span class="mr-[3px] h-6 w-px bg-[#b5b5b5]"></span>
    <label class="grid items-center">
      <select class="col-start-1 row-start-1 h-[26px] w-[70px] appearance-none border border-[#8a8a8a] bg-white pl-[3px] text-[13px]" aria-label="Zoom"><option>195%</option></select>
      <svg class="pointer-events-none col-start-1 row-start-1 mr-1 h-[5px] w-[9px] justify-self-end" viewBox="0 0 9 5"><path d="m.5.500 4 4 4-4" fill="none" stroke="#555"/></svg>
    </label>
    <button class="ml-[5px]" aria-label="Zoom extents"><svg class="size-5" viewBox="0 0 20 20"><path d="M2 7V2h5M13 2h5v5M18 13v5h-5M7 18H2v-5" fill="none" stroke="#111" stroke-width="2.600"/><path d="M10 1v3M10 16v3M1 10h3M16 10h3" stroke="#111" stroke-width="2"/><path d="m8 8 4 4m0-4-4 4" stroke="#111" stroke-width="1.500"/></svg></button>
    <button class="mx-[5px]" aria-label="Zoom options"><svg class="h-[3px] w-[5px]" viewBox="0 0 5 3"><path d="M0 0h5L2.500 3z"/></svg></button>
    <button class="ml-1" aria-label="Preview"><svg class="h-4 w-[22px]" viewBox="0 0 22 16"><path d="M1 8Q11-4 21 8 11 19 1 8z" fill="#eef6fb" stroke="#222" stroke-width="1.500"/><circle cx="11" cy="7.500" r="5.500" fill="#4fa6cf" stroke="#1c4f6c"/><circle cx="11" cy="7.500" r="2.500" fill="#0a1c28"/><circle cx="9.500" cy="6" r="1.200" fill="#fff"/></svg></button>
    <button class="mx-[6px]" aria-label="Preview options"><svg class="h-[3px] w-[5px]" viewBox="0 0 5 3"><path d="M0 0h5L2.500 3z"/></svg></button>
    <button aria-label="Sketch"><svg class="size-6" viewBox="0 0 24 24"><path d="M2 8C8 3 6 13 4 16c-2 6 2 6 6 3" fill="none" stroke="#2b1212" stroke-width="1.800"/><path d="m9 19 2-8 9-8 3 4-1 6-7 5z" fill="#d6282f" stroke="#7a1014" stroke-width=".8"/><path d="m12 11 8-8 1 3-7 8z" fill="#ff8a8a"/><path d="m9 19 2-8 4 7z" fill="#f0c79a"/></svg></button>
    <div class="ml-auto flex h-full shrink-0 items-center gap-[5px]">
      <button aria-label="No preview"><svg class="size-[22px]" viewBox="0 0 24 24"><path d="m5 7 6-5 8 3-2 7-6 5-6-3z" fill="#ddd" stroke="#777"/><ellipse cx="15" cy="7" rx="4" ry="3" fill="#fff" stroke="#888" transform="rotate(30 15 7)"/><path d="M3 17q9-7 18 0-9 10-18 0z" fill="#333" stroke="#111"/></svg></button>
      <button aria-label="Wireframe preview"><svg class="size-6" viewBox="0 0 24 24"><g fill="#f8f8f8" stroke="#444" stroke-width="1.200"><path d="M2 12 14 2l8 7L10 22z"/><ellipse cx="7" cy="16" rx="6" ry="4" transform="rotate(55 7 16)"/><ellipse cx="17" cy="7.500" rx="6" ry="4" transform="rotate(55 17 7.500)"/><ellipse cx="17" cy="7.500" rx="3" ry="1.800" transform="rotate(55 17 7.500)"/></g></svg></button>
      <button class="-mx-[2px] flex size-7 items-center justify-center border border-[#3b7d8c] bg-[#f4fbfd]" aria-label="Shaded preview"><svg class="size-6" viewBox="0 0 24 24"><path d="M2 11 12 2c5-1 9 3 10 7v5l-9 8c-5 1-10-3-11-7z" fill="#a50e14" stroke="#500"/><ellipse cx="7" cy="15.500" rx="6" ry="4" fill="#b8181f" transform="rotate(50 7 15.500)"/><path d="m9 8 6-5 4 3-6 5z" fill="#d8484c"/></svg></button>
      <span class="mx-[4px] h-5 w-px bg-[#b5b5b5]"></span>
      <button aria-label="Selected preview"><svg class="size-6" viewBox="0 0 24 24"><path d="M2 14 13 3l9 6-10 13c-6 0-9-3-10-8z" fill="#d8d8d8" stroke="#777"/><path d="m7 8 6-6c6 0 10 4 9 9l-6 6z" fill="#56b72c" stroke="#245d10"/><ellipse cx="17" cy="7" rx="3.500" ry="2.300" fill="#d7f5c5" transform="rotate(40 17 7)"/><path d="m2 3 17 18" stroke="#111" stroke-width="1.200"/></svg></button>
      <button aria-label="Document preview"><svg class="size-[22px]" viewBox="0 0 22 22"><circle cx="11" cy="11" r="10" fill="#ececec" stroke="#333"/><path d="M11 1a10 10 0 0 0 0 20z" fill="#e58a2d"/><path d="M4 16a10 10 0 0 0 14 0c-4 2-10 2-14 0z" fill="#000" opacity=".35"/></svg></button>
      <span class="mr-[7px] h-5 w-px bg-[#b5b5b5]"></span>
    </div>
  </div>

  <!-- canvas -->
  <div class="relative min-h-0 flex-1 overflow-hidden border-l border-[#7d8a8a] bg-[#d0d0c5] font-['Open_Sans','Noto_Sans_CJK_SC',sans-serif]">
    <svg class="absolute top-0 left-0 h-[463px] w-[552px]" viewBox="728 197 552 463" fill="none">
      <defs>
        <linearGradient id="w1" x1="828" y1="0" x2="944" y2="0" gradientUnits="userSpaceOnUse"><stop offset="0" stop-color="#a3af90"/><stop offset="1" stop-color="#8ddf55"/></linearGradient>
        <linearGradient id="w2" x1="0" y1="454" x2="0" y2="280" gradientUnits="userSpaceOnUse"><stop offset="0" stop-color="#aaab9f"/><stop offset=".35" stop-color="#a3c184"/><stop offset="1" stop-color="#88e04c"/></linearGradient>
      </defs>
      <path d="M902.500 197v463M1195.500 197v463M728 277.500h552M728 375.500h552M728 472.500h552M728 570.500h552" stroke="#bcbdb3" stroke-width="1.300"/>
      <g stroke-width="6" stroke-linecap="round">
        <path d="M830 279C878 279 890 320 944 320" stroke="url(#w1)"/>
        <path d="M830 356C885 357 890 320 944 320" stroke="url(#w1)"/>
        <path d="M965 453C1038 450 968 372 930 328C904 296 914 282 944 281" stroke="url(#w2)"/>
        <path d="M830 318C880 325 820 388 808 420C799 440 806 452 826 453" stroke="#55554f"/>
      </g>
      <g fill="#fff" stroke="#000" stroke-width="3.500">
        <circle cx="824" cy="279" r="7.500"/><circle cx="824" cy="318" r="7.500"/><circle cx="824" cy="357" r="7.500"/>
        <circle cx="948" cy="281" r="7.500"/><circle cx="948" cy="320" r="7.500"/><circle cx="1081" cy="281" r="7.500"/><circle cx="1081" cy="320" r="7.500"/>
        <circle cx="831" cy="453" r="7.500"/><circle cx="831" cy="492" r="7.500"/><circle cx="831" cy="531" r="7.500"/>
        <circle cx="960" cy="453" r="7.500"/><circle cx="960" cy="492" r="7.500"/><circle cx="960" cy="531" r="7.500"/>
      </g>
    </svg>

    <!-- relative item component -->
    <div class="absolute top-[58px] left-0 grid h-[126px] w-[95px] grid-cols-[48px_1fr] rounded-r-md border-2 border-l-0 border-[#2f2f2f] bg-linear-to-b from-[#fdfdfd] via-[#e2e2e2] via-20% to-[#cbcbcd] shadow-sm">
      <svg class="h-[122px] w-10" viewBox="0 0 40 122"><text x="-7" y="66" class="text-lg" fill="#333">N</text><path d="M8.500 42.500h12v34h-12z" fill="#76dd16"/><path d="M9 76V42h12v34" fill="none" stroke="#2f5c18" stroke-width="2"/><path d="M10 57h17v-4l9 8-9 8v-4H10z" fill="#d11019" stroke="#7a0a10"/></svg>
      <div class="pt-[2px] text-[19px] leading-[39px] text-[#222]"><div>i</div><div>+1</div><div>+2</div></div>
    </div>

    <!-- closest point component -->
    <div class="absolute top-[60px] left-[220px] w-[133px] text-[19px]">
      <div class="grid h-[88px] grid-cols-[44px_1fr_55px] items-center rounded-md border-2 border-[#163d06] bg-linear-to-b from-[#d8ffb6] via-[#8ff63c] via-25% to-[#8cf53a] text-center leading-[39px] text-[#163a08] shadow-sm">
        <div><div>P</div><div>G</div></div>
        <svg class="-ml-2 h-11 w-11" viewBox="0 0 44 44" fill="none"><path d="M7 34 30 13M7 34h26" stroke="#4e9a25" stroke-width="1.800"/><path d="m7 33 6-18" stroke="#b71a1a" stroke-width="4"/><circle cx="14" cy="9" r="6" stroke="#254f12" stroke-width="2.600"/><path d="M27 2c2 9 7 13 15 15" stroke="#0a1a04" stroke-width="4"/><circle cx="34" cy="33" r="8" fill="#c7f2a6" stroke="#2a4a1c" stroke-width="2.600"/><circle cx="6" cy="33" r="3" fill="#fff" stroke="#222" stroke-width="2"/></svg>
        <div class="pr-3"><div>P</div><div>D</div></div>
      </div>
      <div class="mx-3 h-[29px] rounded-b-lg bg-[#033a03] text-center leading-[25px] text-[#d3f3cc]">Closest</div>
    </div>

    <!-- divide curve component -->
    <div class="absolute top-[232px] left-[103px] grid h-[126px] w-[129px] grid-cols-[42px_1fr_50px] rounded-md border-2 border-[#2f2f2f] bg-linear-to-b from-[#fdfdfd] via-[#e0e0e0] via-20% to-[#c6c6c9] pt-[2px] text-center text-[19px] leading-[39px] text-[#1d1d1d] shadow-sm">
      <div><div>C</div><div>N</div><div>K</div></div>
      <svg class="mt-10 h-10 w-9" viewBox="0 0 36 40" fill="none"><path d="m4 33 12-6 3-15 12-6" stroke="#a3152a" stroke-width="3.500"/><g fill="#fff" stroke="#222" stroke-width="1.800"><circle cx="4" cy="33" r="3.200"/><circle cx="16" cy="27" r="3.200"/><circle cx="19" cy="12" r="3.200"/><circle cx="31" cy="6" r="3.200"/></g></svg>
      <div class="pr-2"><div>P</div><div>T</div><div>t</div></div>
    </div>

    <!-- view compass -->
    <svg class="absolute right-1 bottom-1 h-12 w-[52px]" viewBox="1224 608 52 48" fill="none"><path d="m1225 618 6-3 5 3-1 4 6-8 6 0-4 8-8 8-1-4-4 0z" fill="#111"/><circle cx="1255" cy="631" r="19" fill="url(#ball)" stroke="#fff" stroke-width="2"/><circle cx="1255" cy="631" r="20" stroke="#333"/><path d="m1236 623 6 2-5 5zM1259 612l5 2-4 4zM1273 636l-6 2 5 4zM1245 648l3-5 4 5z" fill="#fff"/></svg>
    <!-- pointer -->
    <svg class="absolute top-[275px] left-[408px] h-[19px] w-3" viewBox="0 0 12 19"><path d="M.5.500v15.500l3.500-3.500 2.500 6 2.500-1-2.500-6h5z" fill="#fff" stroke="#222"/></svg>

    <!-- quick palette -->
    <div class="absolute bottom-0 left-0 flex h-7 w-[147px] items-center border border-l-0 border-black bg-linear-to-r from-[#f2f2f2] via-[#c9c9c9] to-[#888] *:flex *:w-7 *:justify-center">
      <button aria-label="Slider"><svg class="size-6"><use href="#tray"/></svg></button>
      <button aria-label="Panel grid"><svg class="size-6" viewBox="0 0 24 24"><path d="M11.500 3.500h10v13h-10z" fill="#ddd" stroke="#000" stroke-width="1.500"/><path d="M13 6h7M13 9h7M13 12h7M16 4v12" stroke="#777"/><path d="M2.500 9.500h15v12h-15z" fill="#fff" stroke="#111" stroke-width="1.300"/><path d="M3 18h14" stroke="#c22"/><path d="M6 10v11M10 10v11M14 10v11M3 13h14" stroke="#999"/></svg></button>
      <button aria-label="Range slider"><svg class="size-6" viewBox="0 0 24 24"><g text-anchor="middle" class="font-['Liberation_Sans',sans-serif] text-[9px]"><text x="12" y="8">0.0</text><text x="12" y="22">1.0</text></g><path d="M1.500 9.500h21v4h-21z"/><path d="M4 11.500h18" stroke="#fff" stroke-width="2" stroke-dasharray="3 2"/></svg></button>
      <button aria-label="Note"><svg class="size-6"><use href="#scribble"/></svg></button>
      <button aria-label="Fireworks"><svg class="size-6" viewBox="0 0 24 24" fill="none"><path d="M12 22V11" stroke="#b3201a" stroke-width="2.600"/><path d="M8 22h8" stroke="#333" stroke-width="1.600"/><path d="M12 12Q7 7 1 10M12 12Q8 5 3 4M12 12Q11 5 9 1M12 12q0-6 4-10M12 12q4-6 9-7M12 12q5-3 11-1M12 12q7-1 9 5M12 12q-7-1-10 6M12 12q-4 2-5 7M12 12q5 1 6 7" stroke="#df7a2c" stroke-width="1.700"/><circle cx="12" cy="12" r="2.500" fill="#c63a1a"/></svg></button>
    </div>
  </div>

  <footer class="flex h-[23px] shrink-0 items-center justify-between border-t-2 border-white bg-[#f5f5f5] pt-1 pl-[6px] font-['Liberation_Sans',sans-serif]"><span>...</span><span class="text-[#666]">0.9.0</span></footer>
</section>

<!-- video watermark -->
<div class="pointer-events-none absolute right-14 bottom-10 flex h-12 items-center gap-[13px] text-white/85">
  <svg class="h-8 w-[60px]" viewBox="0 0 60 32" fill="none" stroke="currentColor" stroke-width="3.500"><circle cx="7" cy="7" r="5"/><circle cx="7" cy="25" r="5"/><circle cx="29" cy="16" r="11"/><path d="M58 2 45 16l13 14"/></svg>
  <span class="font-['Noto_Sans_CJK_SC',sans-serif] text-[32px] leading-none font-bold">快剪辑</span>
</div>
</body>
</html>
